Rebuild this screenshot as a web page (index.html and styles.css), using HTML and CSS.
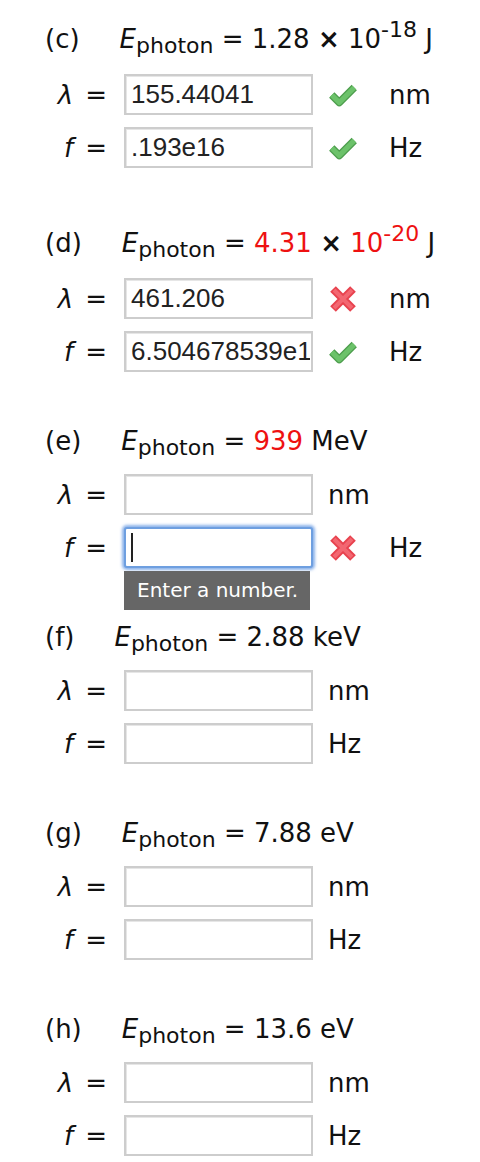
FILE: index.html
```html
<!DOCTYPE html>
<html lang="en">
<head>
<meta charset="utf-8">
<title>Photon energy</title>
<link rel="stylesheet" href="styles.css">
</head>
<body>
<main class="page">

  <section class="part tall">
    <h2 class="head"><span class="tag">(c)</span><i class="E">E</i><sub class="sub">photon</sub> = 1.28 <span class="times">×</span> 10<sup class="sup">-18</sup> J</h2>
    <div class="row">
      <span class="lbl"><i class="var">λ</i><span class="eq">=</span></span>
      <input class="field" type="text" value="155.44041" readonly>
      <span class="icon"><svg width="32" height="26" viewBox="0 0 32 26"><polyline points="4,13 12,21 28,5" fill="none" stroke="#4d9d4d" stroke-width="8" stroke-linejoin="round"/><polyline points="4,13 12,21 28,5" fill="none" stroke="#6cc26a" stroke-width="5.5" stroke-linejoin="round"/></svg></span>
      <span class="unit">nm</span>
    </div>
    <div class="row">
      <span class="lbl"><i class="var">f</i><span class="eq">=</span></span>
      <input class="field" type="text" value=".193e16" readonly>
      <span class="icon"><svg width="32" height="26" viewBox="0 0 32 26"><polyline points="4,13 12,21 28,5" fill="none" stroke="#4d9d4d" stroke-width="8" stroke-linejoin="round"/><polyline points="4,13 12,21 28,5" fill="none" stroke="#6cc26a" stroke-width="5.5" stroke-linejoin="round"/></svg></span>
      <span class="unit">Hz</span>
    </div>
  </section>

  <section class="part tall">
    <h2 class="head"><span class="tag">(d)</span><i class="E">E</i><sub class="sub">photon</sub> = <span class="bad">4.31</span> <span class="times">×</span> <span class="bad">10<sup class="sup">-20</sup></span> J</h2>
    <div class="row">
      <span class="lbl"><i class="var">λ</i><span class="eq">=</span></span>
      <input class="field" type="text" value="461.206" readonly>
      <span class="icon"><svg width="30" height="30" viewBox="0 0 30 30"><path d="M5 5 L25 25 M25 5 L5 25" stroke="#e8424e" stroke-width="8"/><path d="M6 6 L24 24 M24 6 L6 24" stroke="#f36771" stroke-width="4"/></svg></span>
      <span class="unit">nm</span>
    </div>
    <div class="row">
      <span class="lbl"><i class="var">f</i><span class="eq">=</span></span>
      <input class="field" type="text" value="6.504678539e14" readonly>
      <span class="icon"><svg width="32" height="26" viewBox="0 0 32 26"><polyline points="4,13 12,21 28,5" fill="none" stroke="#4d9d4d" stroke-width="8" stroke-linejoin="round"/><polyline points="4,13 12,21 28,5" fill="none" stroke="#6cc26a" stroke-width="5.5" stroke-linejoin="round"/></svg></span>
      <span class="unit">Hz</span>
    </div>
  </section>

  <section class="part">
    <h2 class="head"><span class="tag">(e)</span><i class="E">E</i><sub class="sub">photon</sub> = <span class="bad">939</span> MeV</h2>
    <div class="row">
      <span class="lbl"><i class="var">λ</i><span class="eq">=</span></span>
      <input class="field" type="text" value="" readonly>
      <span class="unit">nm</span>
    </div>
    <div class="row">
      <span class="lbl"><i class="var">f</i><span class="eq">=</span></span>
      <span class="field-wrap">
        <input class="field focused" type="text" value="" readonly>
        <span class="caret"></span>
        <span class="tip">Enter a number.</span>
      </span>
      <span class="icon"><svg width="30" height="30" viewBox="0 0 30 30"><path d="M5 5 L25 25 M25 5 L5 25" stroke="#e8424e" stroke-width="8"/><path d="M6 6 L24 24 M24 6 L6 24" stroke="#f36771" stroke-width="4"/></svg></span>
      <span class="unit">Hz</span>
    </div>
  </section>

  <section class="part">
    <h2 class="head"><span class="tag">(f)</span><i class="E">E</i><sub class="sub">photon</sub> = 2.88 keV</h2>
    <div class="row">
      <span class="lbl"><i class="var">λ</i><span class="eq">=</span></span>
      <input class="field" type="text" value="" readonly>
      <span class="unit">nm</span>
    </div>
    <div class="row">
      <span class="lbl"><i class="var">f</i><span class="eq">=</span></span>
      <input class="field" type="text" value="" readonly>
      <span class="unit">Hz</span>
    </div>
  </section>

  <section class="part">
    <h2 class="head"><span class="tag">(g)</span><i class="E">E</i><sub class="sub">photon</sub> = 7.88 eV</h2>
    <div class="row">
      <span class="lbl"><i class="var">λ</i><span class="eq">=</span></span>
      <input class="field" type="text" value="" readonly>
      <span class="unit">nm</span>
    </div>
    <div class="row">
      <span class="lbl"><i class="var">f</i><span class="eq">=</span></span>
      <input class="field" type="text" value="" readonly>
      <span class="unit">Hz</span>
    </div>
  </section>

  <section class="part">
    <h2 class="head"><span class="tag">(h)</span><i class="E">E</i><sub class="sub">photon</sub> = 13.6 eV</h2>
    <div class="row">
      <span class="lbl"><i class="var">λ</i><span class="eq">=</span></span>
      <input class="field" type="text" value="" readonly>
      <span class="unit">nm</span>
    </div>
    <div class="row">
      <span class="lbl"><i class="var">f</i><span class="eq">=</span></span>
      <input class="field" type="text" value="" readonly>
      <span class="unit">Hz</span>
    </div>
  </section>

</main>
</body>
</html>
```

FILE: styles.css
```css
html, body {
  margin: 0;
  padding: 0;
  background: #ffffff;
}

body {
  font-family: "DejaVu Sans", Verdana, sans-serif;
  color: #111111;
}

.page {
  padding: 20px 0 0 0;
  width: 480px;
  box-sizing: border-box;
}

.part {
  display: flex;
  flex-direction: column;
  gap: 12px;
  margin-bottom: 56px;
}

.head {
  margin: 0 0 8px 0;
  padding-left: 45px;
  font-size: 26px;
  font-weight: normal;
  line-height: 26px;
  height: 26px;
  white-space: nowrap;
}

.part.tall .head {
  padding-top: 6px;
  margin-bottom: 10px;
}

.tag {
  margin-right: 40px;
}

.E {
  font-style: italic;
}

.sub {
  font-size: 22px;
  line-height: 0;
  vertical-align: -5px;
}

.sup {
  font-size: 22px;
  line-height: 0;
  vertical-align: 11px;
}

.times {
  font-weight: bold;
}

.bad {
  color: #ee1111;
}

.row {
  display: flex;
  align-items: center;
  height: 41px;
}

.lbl {
  width: 107px;
  display: flex;
  justify-content: flex-end;
  gap: 12px;
  font-size: 26px;
  flex-shrink: 0;
}

.var {
  font-style: italic;
}

.field {
  box-sizing: border-box;
  width: 189px;
  height: 41px;
  margin: 0 0 0 17px;
  padding: 0 1px 0 5px;
  border: 2px solid #cdcdcd;
  border-radius: 0;
  box-shadow: inset 1px 1px 0 #e6e6e6;
  background: #ffffff;
  font-family: "Liberation Sans", Arial, sans-serif;
  font-size: 26px;
  color: #222222;
  outline: none;
  flex-shrink: 0;
}

.field-wrap {
  position: relative;
  display: block;
  margin-left: 17px;
  flex-shrink: 0;
}

.field-wrap .field {
  margin-left: 0;
  display: block;
}

.field.focused {
  border: 2px solid #6e9fe0;
  border-radius: 3px;
  box-shadow: 0 0 3px 2px rgba(90, 145, 225, 0.7);
}

.caret {
  position: absolute;
  left: 7px;
  top: 6px;
  width: 2px;
  height: 29px;
  background: #222222;
}

.tip {
  position: absolute;
  left: 0;
  top: 44px;
  width: 186px;
  height: 39px;
  box-sizing: border-box;
  padding-left: 13px;
  background: #666666;
  color: #ffffff;
  font-size: 20px;
  line-height: 39px;
  white-space: nowrap;
}

.icon {
  width: 30px;
  margin-left: 15px;
  margin-right: 16px;
  display: flex;
  align-items: center;
  justify-content: flex-start;
  flex-shrink: 0;
}

.icon svg {
  display: block;
}

.unit {
  margin-left: 15px;
  font-size: 26px;
}

.icon + .unit {
  margin-left: 0;
  padding-left: 15px;
}
```
